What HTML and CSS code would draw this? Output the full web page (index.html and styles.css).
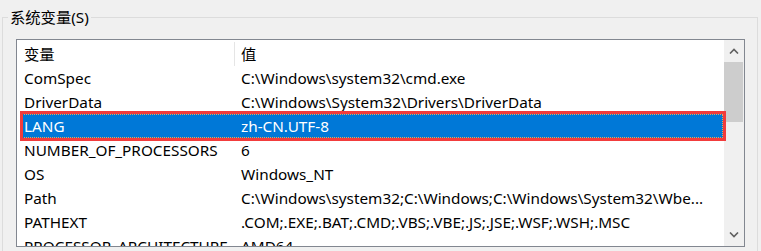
FILE: index.html
```html
<!DOCTYPE html>
<html lang="zh-CN">
<head>
  <meta charset="UTF-8">
  <title>系统变量</title>
  <link rel="stylesheet" href="styles.css">
</head>
<body>

  <!-- System variables group -->
  <div class="group">
    <span class="group-title">系统变量(S)</span>

    <div class="list">
      <div class="rows">
        <div class="header">
          <div class="col col-name">变量</div>
          <div class="col col-value">值</div>
        </div>
        <div class="row"><div class="col col-name">ComSpec</div><div class="col col-value">C:\Windows\system32\cmd.exe</div></div>
        <div class="row"><div class="col col-name">DriverData</div><div class="col col-value">C:\Windows\System32\Drivers\DriverData</div></div>
        <div class="row selected"><div class="col col-name">LANG</div><div class="col col-value">zh-CN.UTF-8</div></div>
        <div class="row"><div class="col col-name">NUMBER_OF_PROCESSORS</div><div class="col col-value">6</div></div>
        <div class="row"><div class="col col-name">OS</div><div class="col col-value">Windows_NT</div></div>
        <div class="row"><div class="col col-name">Path</div><div class="col col-value">C:\Windows\system32;C:\Windows;C:\Windows\System32\Wbe...</div></div>
        <div class="row"><div class="col col-name">PATHEXT</div><div class="col col-value">.COM;.EXE;.BAT;.CMD;.VBS;.VBE;.JS;.JSE;.WSF;.WSH;.MSC</div></div>
        <div class="row"><div class="col col-name">PROCESSOR_ARCHITECTURE</div><div class="col col-value">AMD64</div></div>
      </div>

      <!-- Scrollbar -->
      <div class="scrollbar">
        <div class="sb-btn">
          <svg width="10" height="6" viewBox="0 0 10 6"><polyline points="1,5.5 5,1.5 9,5.5" fill="none" stroke="#606060" stroke-width="1.6"/></svg>
        </div>
        <div class="sb-track">
          <div class="sb-thumb"></div>
        </div>
        <div class="sb-btn">
          <svg width="10" height="6" viewBox="0 0 10 6"><polyline points="1,0.5 5,4.5 9,0.5" fill="none" stroke="#606060" stroke-width="1.6"/></svg>
        </div>
      </div>
    </div>
  </div>

  <!-- Highlight annotation -->
  <div class="mark"></div>

</body>
</html>
```

FILE: styles.css
```css
body {
  margin: 0;
  width: 761px;
  height: 251px;
  overflow: hidden;
  background-color: #f0f0f0;
  font-family: "Noto Sans", "Noto Sans CJK SC", sans-serif;
  font-size: 15.3px;
  color: #000;
  position: relative;
}

/* Group box */
.group {
  position: relative;
  margin: 17px 0 0 2px;
  width: 756px;
  height: 240px;
  border: 1px solid #dcdcdc;
  border-bottom: none;
  padding: 21px 0 0 13px;
  box-sizing: border-box;
}

.group-title {
  position: absolute;
  top: -11px;
  left: 5px;
  padding: 0 2px;
  line-height: 20px;
  background-color: #f0f0f0;
}

/* List view */
.list {
  width: 729px;
  height: 208px;
  border: 1px solid #828790;
  box-sizing: border-box;
  background-color: #fff;
  display: flex;
  overflow: hidden;
}

.rows {
  flex: 1;
  overflow: hidden;
}

.header,
.row {
  display: flex;
  white-space: nowrap;
}

.header {
  height: 26px;
}

.row {
  height: 24px;
  line-height: 24px;
}

.col {
  overflow: hidden;
}

.col-name {
  width: 218px;
  padding-left: 7px;
  box-sizing: border-box;
  flex-shrink: 0;
}

.col-value {
  flex: 1;
  padding-left: 6px;
}

.header .col-name {
  border-right: 1px solid #e5e5e5;
  margin-top: 2px;
  line-height: 24px;
  height: 24px;
}

.header .col-value {
  flex: none;
  width: 486px;
  border-right: 1px solid #e5e5e5;
  margin-top: 2px;
  line-height: 24px;
  height: 24px;
}

.row.selected {
  position: relative;
  color: #fff;
  background: linear-gradient(#0078d7, #0078d7) no-repeat 3px 0 / calc(100% - 4px) 100%;
}

.row.selected::after {
  content: "";
  position: absolute;
  top: 0;
  bottom: 0;
  left: 3px;
  right: 1px;
  border: 1px dotted #e9a559;
}

/* Scrollbar */
.scrollbar {
  width: 20px;
  background-color: #f0f0f0;
  display: flex;
  flex-direction: column;
}

.sb-btn {
  height: 22px;
  display: flex;
  align-items: center;
  justify-content: center;
}

.sb-btn svg {
  display: block;
  margin-right: 1px;
}

.sb-track {
  flex: 1;
}

.sb-thumb {
  height: 60px;
  margin-right: 1px;
  background-color: #cdcdcd;
}

/* Red annotation */
.mark {
  position: absolute;
  left: 20px;
  top: 111px;
  width: 706px;
  height: 30px;
  border: 3px solid #f23c3c;
  box-sizing: border-box;
}
```
